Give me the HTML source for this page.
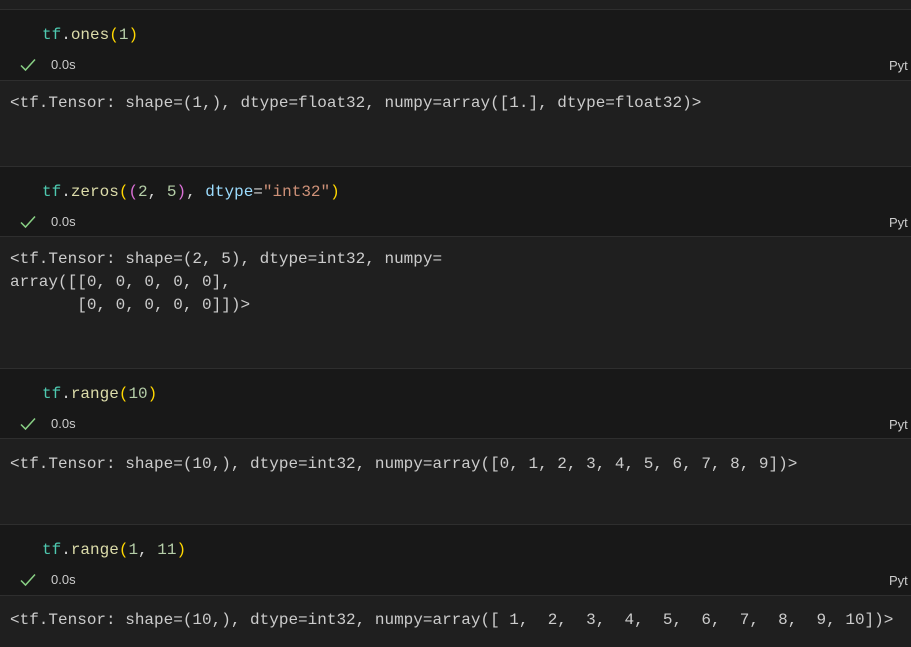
<!DOCTYPE html>
<html><head><meta charset="utf-8"><style>
body{margin:0;width:911px;height:647px;overflow:hidden;background:#1f1f1f;position:relative;font-family:"Liberation Mono",monospace;}
.code{position:absolute;left:0;width:911px;background:#181818;border-top:1px solid #2e2e2e;border-bottom:1px solid #2e2e2e;}
.ln{position:absolute;left:42px;font-size:16px;line-height:20px;color:#d4d4d4;white-space:pre;}
.st{position:absolute;left:20px;font-family:"Liberation Sans",sans-serif;font-size:13px;color:#cccccc;}
.st svg{position:absolute;left:0;top:1px}
.st span{position:absolute;left:31px;white-space:pre}
.py{position:absolute;left:889px;font-family:"Liberation Sans",sans-serif;font-size:13px;color:#cccccc;}
.out{position:absolute;left:10px;font-size:16px;line-height:23px;color:#cccccc;white-space:pre;}
.t{color:#4ec9b0}.f{color:#dcdcaa}.y{color:#ffd700}.p{color:#da70d6}.n{color:#b5cea8}.v{color:#9cdcfe}.s{color:#ce9178}
</style></head><body>
<div class="code" style="top:9px;height:70px"></div>
<div class="ln" style="top:25px"><span class="t">tf</span>.<span class="f">ones</span><span class="y">(</span><span class="n">1</span><span class="y">)</span></div>
<div class="st" style="top:57px"><svg width="16" height="14" viewBox="0 0 16 14"><path d="M1 7.5l4.5 4.5L15 1.5" stroke="#89d185" stroke-width="1.5" fill="none"/></svg><span>0.0s</span></div>
<div class="py" style="top:58px">Pyt</div>
<div class="out" style="top:92px">&lt;tf.Tensor: shape=(1,), dtype=float32, numpy=array([1.], dtype=float32)&gt;</div>

<div class="code" style="top:166px;height:69px"></div>
<div class="ln" style="top:182px"><span class="t">tf</span>.<span class="f">zeros</span><span class="y">(</span><span class="p">(</span><span class="n">2</span>, <span class="n">5</span><span class="p">)</span>, <span class="v">dtype</span>=<span class="s">"int32"</span><span class="y">)</span></div>
<div class="st" style="top:214px"><svg width="16" height="14" viewBox="0 0 16 14"><path d="M1 7.5l4.5 4.5L15 1.5" stroke="#89d185" stroke-width="1.5" fill="none"/></svg><span>0.0s</span></div>
<div class="py" style="top:215px">Pyt</div>
<div class="out" style="top:248px">&lt;tf.Tensor: shape=(2, 5), dtype=int32, numpy=
array([[0, 0, 0, 0, 0],
       [0, 0, 0, 0, 0]])&gt;</div>

<div class="code" style="top:368px;height:69px"></div>
<div class="ln" style="top:384px"><span class="t">tf</span>.<span class="f">range</span><span class="y">(</span><span class="n">10</span><span class="y">)</span></div>
<div class="st" style="top:416px"><svg width="16" height="14" viewBox="0 0 16 14"><path d="M1 7.5l4.5 4.5L15 1.5" stroke="#89d185" stroke-width="1.5" fill="none"/></svg><span>0.0s</span></div>
<div class="py" style="top:417px">Pyt</div>
<div class="out" style="top:453px">&lt;tf.Tensor: shape=(10,), dtype=int32, numpy=array([0, 1, 2, 3, 4, 5, 6, 7, 8, 9])&gt;</div>

<div class="code" style="top:524px;height:70px"></div>
<div class="ln" style="top:540px"><span class="t">tf</span>.<span class="f">range</span><span class="y">(</span><span class="n">1</span>, <span class="n">11</span><span class="y">)</span></div>
<div class="st" style="top:572px"><svg width="16" height="14" viewBox="0 0 16 14"><path d="M1 7.5l4.5 4.5L15 1.5" stroke="#89d185" stroke-width="1.5" fill="none"/></svg><span>0.0s</span></div>
<div class="py" style="top:573px">Pyt</div>
<div class="out" style="top:609px">&lt;tf.Tensor: shape=(10,), dtype=int32, numpy=array([ 1,  2,  3,  4,  5,  6,  7,  8,  9, 10])&gt;</div>
</body></html>
